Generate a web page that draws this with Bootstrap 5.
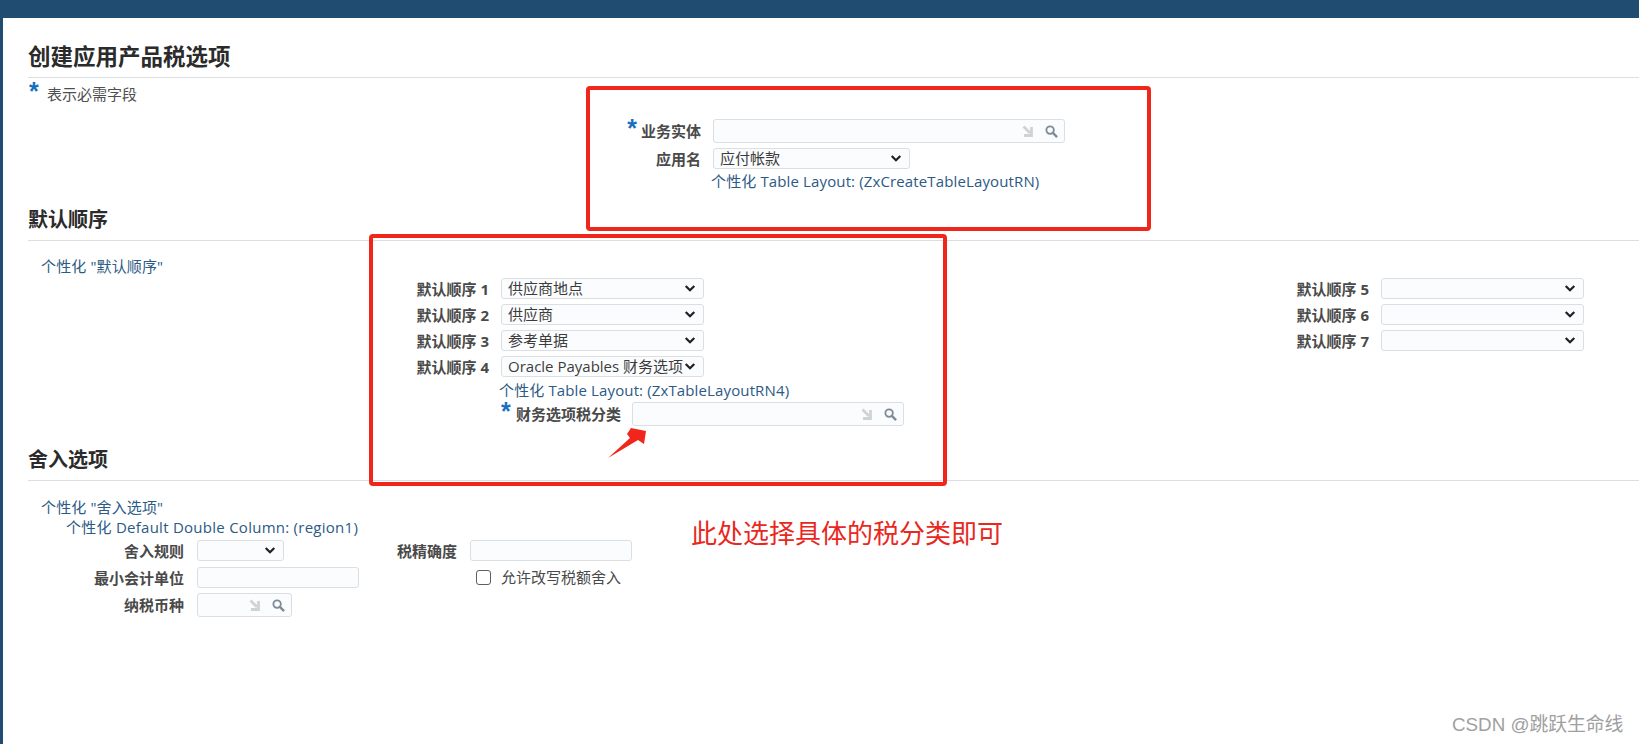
<!DOCTYPE html>
<html lang="zh-CN">
<head>
<meta charset="utf-8">
<title>创建应用产品税选项</title>
<link rel="stylesheet" href="https://cdn.jsdelivr.net/npm/bootstrap@5.3.0/dist/css/bootstrap.min.css">
<style>
html, body { height: 100%; overflow: hidden; }
body { font-family: "Open Sans", "Noto Sans CJK SC", sans-serif; font-size: 15px; line-height: 20px; color: #4a4a4a; background: #fff; position: relative; }
.shell { border-left: 3px solid #1f4c70; min-height: 744px; }
.topbar { height: 18px; background: #1f4c70; }
.wrap { padding-left: 25px; }
.page-title { font-size: 22.5px; line-height: 28px; font-weight: 700; color: #2b2b2b; margin: 0; padding: 25px 0 6px; border-bottom: 1px solid #d9dfe3; }
.sec-title { font-size: 20px; line-height: 26px; font-weight: 700; color: #2b2b2b; margin: 0; padding-bottom: 7px; border-bottom: 1px solid #d9dfe3; }
.note-row { height: 27px; padding-top: 6px; padding-left: 1px; }
.req { color: #1a6fc0; font-family: "Liberation Sans", sans-serif; font-weight: 700; font-size: 25px; line-height: 14px; height: 14px; width: 11px; flex: none; }
.note-text { margin-left: 7px; color: #4f4f4f; }
.top-form { margin-left: 558px; padding-top: 14px; }
.lab { font-weight: 700; color: #4a4a4a; text-align: right; flex: none; white-space: nowrap; }
.lab-a { width: 115px; }
.ctl-gap { gap: 12px; }
.ctl-gap-wide { gap: 13px; }
.row-gap { gap: 5px; }
.ora { font-size: 15px; line-height: 19px; color: #3c3c3c; background-color: #fbfcfe; border: 1px solid #d9dfe3; border-radius: 3px; }
.ora-sel.form-select { height: 21px; min-height: 0; padding: 0 20px 0 6px; background-image: url("data:image/svg+xml,%3csvg xmlns='http://www.w3.org/2000/svg' viewBox='0 0 14 10'%3e%3cpath fill='none' stroke='%23222' stroke-width='2.6' d='M2 2l5 5 5-5'/%3e%3c/svg%3e"); background-size: 12px 9px; background-position: right 7px center; flex: none; }
.ora-inp.form-control { height: 21px; min-height: 0; padding: 0 6px; flex: none; }
.lov { height: 24px; flex: none; padding-right: 6px; }
.lov svg { flex: none; }
.lov-arrow { margin-right: 11px; }
.lov-inp { flex: 1 1 0; width: 0; min-width: 0; border: 0; background: transparent; outline: 0; padding: 0 6px; }
.w-197 { width: 197px; }
.w-202 { width: 203px; }
.w-87 { width: 87px; }
.w-162 { width: 162px; }
.w-351 { width: 352px; }
.w-272 { width: 272px; }
.w-95 { width: 95px; }
.ora-link { color: #2b5a85; text-decoration: none; white-space: nowrap; letter-spacing: .13px; }
.link-a { display: block; margin-left: 683px; padding-top: 2px; }
.sec1 { margin-top: 16px; }
.tri { height: 201px; }
.sec-pad { padding-left: 13px; padding-top: 15px; }
.col-one { width: 347px; flex: none; }
.col-mid { width: 919px; flex: none; padding-top: 37px; }
.col-end { padding-top: 37px; }
.lab-m { width: 73px; margin-left: 41px; }
.mid-link { display: block; margin-left: 124px; padding-top: 3px; height: 25px; line-height: 20px; }
.sub-lov { margin-left: 126px; height: 24px; }
.star-lab { width: 119px; text-align: left; }
.lab-e { width: 75px; }
.sec2 { padding-top: 5px; }
.sec3-links { padding-left: 13px; padding-top: 16px; }
.link-b { display: block; margin-left: 25px; letter-spacing: .26px; }
.two-col { padding-top: 3px; }
.col-l { width: 333px; flex: none; }
.lab-l { width: 156px; }
.lab-r { width: 96px; }
.check-line { margin-left: 115px; height: 20px; }
.ora-check.form-check-input { width: 15px; height: 15px; margin: 0; border: 1px solid #5f5f5f; border-radius: 3px; flex: none; }
.check-gap { gap: 10px; }
.rows-26 { gap: 5px; }
.rows-l { gap: 6px; }
.lov-row { margin-top: -1px; }
.mark-box { position: absolute; border: 4px solid #f0261b; border-radius: 4px; pointer-events: none; }
.box-a { left: 586px; top: 86px; width: 565px; height: 145px; }
.box-b { left: 369px; top: 234px; width: 578px; height: 252px; }
.mark-arrow { position: absolute; left: 600px; top: 420px; width: 50px; height: 42px; }
.mark-text { position: absolute; left: 691px; top: 514px; font-family: "Noto Sans CJK SC", sans-serif; font-size: 26px; line-height: 36px; color: #e8281e; white-space: nowrap; }
.wm { position: absolute; left: 1452px; top: 712px; font-family: "Liberation Sans", "Noto Sans CJK SC", sans-serif; font-size: 18.8px; line-height: 26px; color: #a0a0a0; white-space: nowrap; }
</style>
</head>
<body>
<div class="shell">
  <div class="topbar"></div>
  <div class="wrap">
    <h1 class="page-title">创建应用产品税选项</h1>
    <div class="note-row d-flex align-items-start">
      <span class="req">*</span><span class="note-text">表示必需字段</span>
    </div>

    <div class="top-form d-flex flex-column row-gap">
      <div class="d-flex align-items-center ctl-gap">
        <span class="lab lab-a d-flex justify-content-end"><span class="req me-1">*</span>业务实体</span>
        <div class="ora lov w-351 d-flex align-items-center">
          <input class="lov-inp" type="text" aria-label="业务实体">
          <svg width="12" height="12" viewBox="0 0 12 12" class="lov-arrow"><path d="M1.5 1.5 8 8M9.500 2v8.500H2" fill="none" stroke="#cfd3d3" stroke-width="2.800"/></svg>
          <svg width="13" height="13" viewBox="0 0 14 14"><circle cx="5.500" cy="5.500" r="4" fill="none" stroke="#7f8c97" stroke-width="2"/><path d="M8.500 8.500 13 13" stroke="#7f8c97" stroke-width="2.600"/></svg>
        </div>
      </div>
      <div class="d-flex align-items-center ctl-gap">
        <span class="lab lab-a">应用名</span>
        <select class="form-select ora ora-sel w-197" aria-label="应用名"><option>应付帐款</option></select>
      </div>
    </div>
    <a href="#" class="ora-link link-a">个性化 Table Layout: (ZxCreateTableLayoutRN)</a>

    <section class="sec1">
      <h2 class="sec-title">默认顺序</h2>
      <div class="tri d-flex">
        <div class="col-one sec-pad"><a href="#" class="ora-link">个性化 "默认顺序"</a></div>
        <div class="col-mid">
          <div class="d-flex flex-column rows-26">
            <div class="d-flex align-items-center ctl-gap"><span class="lab lab-m">默认顺序 1</span><select class="form-select ora ora-sel w-202" aria-label="默认顺序 1"><option>供应商地点</option></select></div>
            <div class="d-flex align-items-center ctl-gap"><span class="lab lab-m">默认顺序 2</span><select class="form-select ora ora-sel w-202" aria-label="默认顺序 2"><option>供应商</option></select></div>
            <div class="d-flex align-items-center ctl-gap"><span class="lab lab-m">默认顺序 3</span><select class="form-select ora ora-sel w-202" aria-label="默认顺序 3"><option>参考单据</option></select></div>
            <div class="d-flex align-items-center ctl-gap"><span class="lab lab-m">默认顺序 4</span><select class="form-select ora ora-sel w-202" aria-label="默认顺序 4"><option>Oracle Payables 财务选项</option></select></div>
          </div>
          <a href="#" class="ora-link mid-link">个性化 Table Layout: (ZxTableLayoutRN4)</a>
          <div class="sub-lov d-flex align-items-center ctl-gap">
            <span class="lab star-lab d-flex"><span class="req me-1">*</span>财务选项税分类</span>
            <div class="ora lov w-272 d-flex align-items-center">
              <input class="lov-inp" type="text" aria-label="财务选项税分类">
              <svg width="12" height="12" viewBox="0 0 12 12" class="lov-arrow"><path d="M1.5 1.5 8 8M9.500 2v8.500H2" fill="none" stroke="#cfd3d3" stroke-width="2.800"/></svg>
              <svg width="13" height="13" viewBox="0 0 14 14"><circle cx="5.500" cy="5.500" r="4" fill="none" stroke="#7f8c97" stroke-width="2"/><path d="M8.500 8.500 13 13" stroke="#7f8c97" stroke-width="2.600"/></svg>
            </div>
          </div>
        </div>
        <div class="col-end d-flex flex-column rows-26">
          <div class="d-flex align-items-center ctl-gap"><span class="lab lab-e">默认顺序 5</span><select class="form-select ora ora-sel w-202" aria-label="默认顺序 5"><option></option></select></div>
          <div class="d-flex align-items-center ctl-gap"><span class="lab lab-e">默认顺序 6</span><select class="form-select ora ora-sel w-202" aria-label="默认顺序 6"><option></option></select></div>
          <div class="d-flex align-items-center ctl-gap"><span class="lab lab-e">默认顺序 7</span><select class="form-select ora ora-sel w-202" aria-label="默认顺序 7"><option></option></select></div>
        </div>
      </div>
    </section>

    <section class="sec2">
      <h2 class="sec-title">舍入选项</h2>
      <div class="sec3-links">
        <a href="#" class="ora-link d-block">个性化 "舍入选项"</a>
        <a href="#" class="ora-link link-b">个性化 Default Double Column: (region1)</a>
      </div>
      <div class="two-col d-flex">
        <div class="col-l d-flex flex-column rows-l">
          <div class="d-flex align-items-center ctl-gap-wide"><span class="lab lab-l">舍入规则</span><select class="form-select ora ora-sel w-87" aria-label="舍入规则"><option></option></select></div>
          <div class="d-flex align-items-center ctl-gap-wide"><span class="lab lab-l">最小会计单位</span><input class="form-control ora ora-inp w-162" type="text" aria-label="最小会计单位"></div>
          <div class="lov-row d-flex align-items-center ctl-gap-wide"><span class="lab lab-l">纳税币种</span>
            <div class="ora lov w-95 d-flex align-items-center">
              <input class="lov-inp" type="text" aria-label="纳税币种">
              <svg width="12" height="12" viewBox="0 0 12 12" class="lov-arrow"><path d="M1.5 1.5 8 8M9.500 2v8.500H2" fill="none" stroke="#cfd3d3" stroke-width="2.800"/></svg>
              <svg width="13" height="13" viewBox="0 0 14 14"><circle cx="5.500" cy="5.500" r="4" fill="none" stroke="#7f8c97" stroke-width="2"/><path d="M8.500 8.500 13 13" stroke="#7f8c97" stroke-width="2.600"/></svg>
            </div>
          </div>
        </div>
        <div class="d-flex flex-column rows-l">
          <div class="d-flex align-items-center ctl-gap-wide"><span class="lab lab-r">税精确度</span><input class="form-control ora ora-inp w-162" type="text" aria-label="税精确度"></div>
          <div class="check-line d-flex align-items-center check-gap">
            <input class="form-check-input ora-check" type="checkbox" id="allowEdit">
            <label for="allowEdit">允许改写税额舍入</label>
          </div>
        </div>
      </div>
    </section>
  </div>
</div>

<div class="mark-box box-a"></div>
<div class="mark-box box-b"></div>
<svg class="mark-arrow" viewBox="0 0 50 42"><polygon points="31,8 46,11 44,24 38,20 8,38 30,18 27,14" fill="#f0261b"/></svg>
<div class="mark-text">此处选择具体的税分类即可</div>
<div class="wm">CSDN @跳跃生命线</div>

<script src="https://cdn.jsdelivr.net/npm/bootstrap@5.3.0/dist/js/bootstrap.bundle.min.js"></script>
</body>
</html>
